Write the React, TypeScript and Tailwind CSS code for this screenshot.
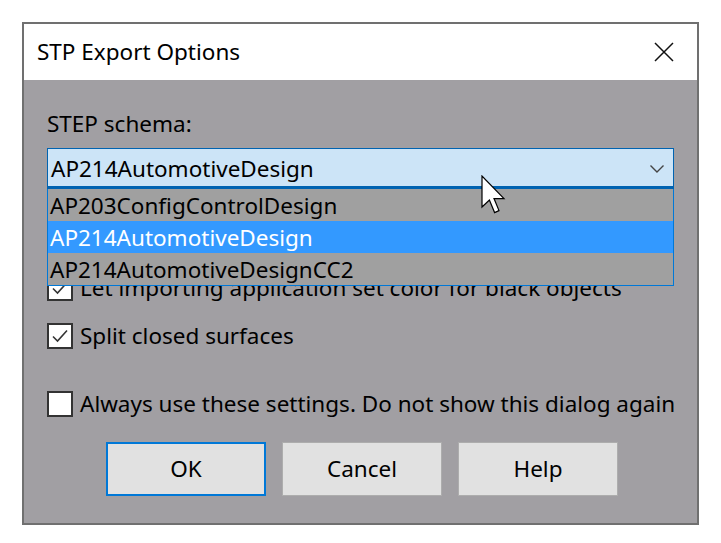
import { useState } from "react"

const font = { fontFamily: '"Noto Sans", "Open Sans", sans-serif' }

const schemas = ["AP203ConfigControlDesign", "AP214AutomotiveDesign", "AP214AutomotiveDesignCC2"]

function CheckBox({ checked }: { checked: boolean }) {
  return (
    <div className="w-[26px] h-[26px] flex-shrink-0 bg-white border-2 border-[#333333] flex items-center justify-center">
      {checked && (
        <svg width="20" height="20" viewBox="0 0 20 20">
          <path d="M3 10.5 L7.5 15 L17 4.5" fill="none" stroke="#333333" strokeWidth="1.6" />
        </svg>
      )}
    </div>
  )
}

function CheckRow({ checked, label }: { checked: boolean; label: string }) {
  return (
    <div className="flex items-center gap-[7px] overflow-x-clip whitespace-nowrap">
      <CheckBox checked={checked} />
      <span className="text-[22.5px] leading-[30px] text-black">{label}</span>
    </div>
  )
}

export default function App() {
  const [selected] = useState(1)

  return (
    <div className="w-[721px] h-[543px] bg-white pt-[22px] pl-[22px]" style={font}>
      <div className="w-[677px] h-[503px] border-2 border-[#707070] flex flex-col">
        {/* Title bar */}
        <div className="h-[56px] bg-white flex items-center justify-between pl-[13px] pr-[23px] flex-shrink-0">
          <span className="text-[22.5px] text-black">STP Export Options</span>
          <svg width="20" height="20" viewBox="0 0 20 20">
            <path d="M1 1 L19 19 M19 1 L1 19" stroke="#111111" strokeWidth="1.5" />
          </svg>
        </div>

        {/* Body */}
        <div className="flex-1 bg-[#a19fa3] px-[23px] pt-[30px] relative">
          <div className="text-[22.5px] leading-[28px] text-black">STEP schema:</div>

          <div className="relative mt-[10px]">
            <div className="h-[41px] bg-[#cce4f7] border border-[#0063b1] border-b-[3px] flex items-center justify-between pl-[3px] pr-[8px] pt-[2px]">
              <span className="text-[22.5px] leading-[30px] text-black">{schemas[selected]}</span>
              <svg width="16" height="10" viewBox="0 0 16 10">
                <path d="M1.5 1.5 L8 8 L14.5 1.5" fill="none" stroke="#444444" strokeWidth="1.4" />
              </svg>
            </div>

            {/* Drop-down list */}
            <div className="absolute top-full left-0 right-0 z-10 bg-[#a0a0a0] border border-t-0 border-[#0078d7]">
              {schemas.map((s, i) => (
                <div
                  key={s}
                  className={
                    i === selected
                      ? "h-[32px] flex items-center pl-[2px] pt-[2px] bg-[#3399ff] text-white text-[22.5px] leading-[30px]"
                      : "h-[32px] flex items-center pl-[2px] pt-[2px] text-black text-[22.5px] leading-[30px]"
                  }
                >
                  {s}
                </div>
              ))}
            </div>

            {/* Mouse pointer */}
            <svg
              className="absolute z-20 left-[434px] top-[27px]"
              width="26"
              height="40"
              viewBox="0 0 13 20"
            >
              <path
                d="M0.5 0.5 L0.5 16 L4.2 12.5 L6.8 18.8 L9 17.8 L6.5 11.8 L11.5 11.8 Z"
                fill="white"
                stroke="black"
                strokeWidth="0.6"
                strokeLinejoin="miter"
              />
            </svg>
          </div>

          <div className="mt-[84px] flex flex-col">
            <CheckRow checked label="Let importing application set color for black objects" />
            <div className="mt-[18px]">
              <CheckRow checked label="Split closed surfaces" />
            </div>
            <div className="mt-[38px]">
              <CheckRow checked={false} label="Always use these settings. Do not show this dialog again" />
            </div>
          </div>

          <div className="mt-[23px] ml-[59px] flex gap-[16px]">
            <button className="w-[160px] h-[54px] bg-[#e1e1e1] border-2 border-[#0078d7] text-[22.5px] text-black">
              OK
            </button>
            <button className="w-[160px] h-[54px] bg-[#e1e1e1] border border-[#adadad] text-[22.5px] text-black">
              Cancel
            </button>
            <button className="w-[160px] h-[54px] bg-[#e1e1e1] border border-[#adadad] text-[22.5px] text-black">
              Help
            </button>
          </div>
        </div>
      </div>
    </div>
  )
}
